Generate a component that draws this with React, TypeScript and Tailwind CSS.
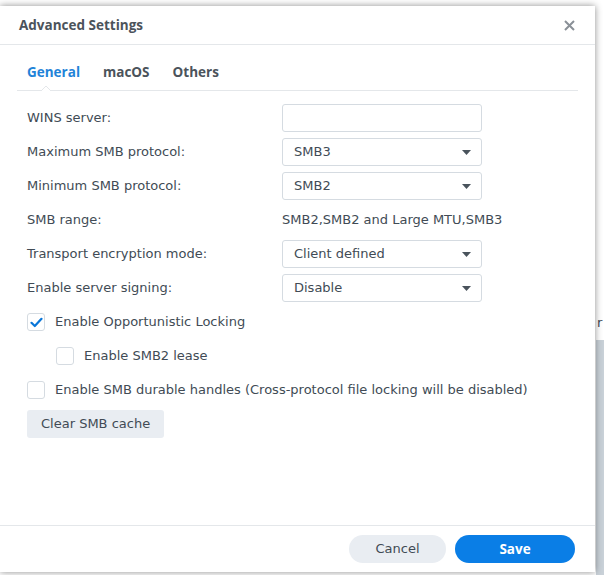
import React from "react";

const txt = "text-[#414b55]";

function Select({ value }: { value: string }) {
  return (
    <div className="w-[200px] h-[28px] border border-[#d5dbe1] rounded-[3px] bg-white flex items-center justify-between pl-[11px] pr-[10px]">
      <span className={`text-[13px] ${txt}`}>{value}</span>
      <svg width="9" height="5" viewBox="0 0 9 5"><path d="M0 0 L9 0 L4.5 5 Z" fill="#4a535c" /></svg>
    </div>
  );
}

function Check({ checked }: { checked?: boolean }) {
  return (
    <div className="w-[18px] h-[18px] border border-[#d5dbe1] rounded-[3px] bg-white flex items-center justify-center">
      {checked && (
        <svg width="13" height="11" viewBox="0 0 13 11">
          <path d="M1.5 5.8 L4.8 9 L11.5 1.8" fill="none" stroke="#0a76d8" strokeWidth="2.2" strokeLinecap="round" strokeLinejoin="round" />
        </svg>
      )}
    </div>
  );
}

function Row({ label, children }: { label: string; children: React.ReactNode }) {
  return (
    <div className="h-[34px] flex items-center">
      <div className={`w-[255px] text-[13px] ${txt}`}>{label}</div>
      {children}
    </div>
  );
}

export default function App() {
  return (
    <div
      className="relative w-[604px] h-[575px] bg-white overflow-hidden"
      style={{ fontFamily: '"DejaVu Sans", Verdana, sans-serif' }}
    >
      {/* background window content */}
      <div className="absolute left-[597px] top-[313px] text-[13px] text-[#414b55]">r</div>
      <div className="absolute left-[596px] top-[340px] w-[20px] h-[240px] bg-[#c9d1d8]" />

      <div className="pt-[6px]">
        <div className="relative w-[595px] h-[566px] bg-white shadow-[0_0_7px_rgba(0,0,0,0.45)] flex flex-col">
          {/* header */}
          <div className="h-[39px] flex items-center justify-between pl-[19px] pr-[20px] border-b border-[#e4e7ea]">
            <span className="text-[13.5px] font-bold text-[#4b535b]" style={{ fontFamily: '"Open Sans", sans-serif' }}>
              Advanced Settings
            </span>
            <svg width="11" height="11" viewBox="0 0 11 11">
              <path d="M1 1 L10 10 M10 1 L1 10" stroke="#8a9097" strokeWidth="2" />
            </svg>
          </div>

          {/* tabs */}
          <div className="mx-[17px] mt-[12px] h-[34px] border-b border-[#e4e7ea] relative flex items-center gap-[23px] pl-[10px] pb-[3px]" style={{ fontFamily: '"Open Sans", sans-serif' }}>
            <span className="text-[13.5px] font-bold text-[#1f83d8]">General</span>
            <span className="text-[13.5px] font-bold text-[#4b535b]">macOS</span>
            <span className="text-[13.5px] font-bold text-[#4b535b]">Others</span>
            <div className="absolute left-[24px] bottom-[-1px] w-[10px] h-[6px]">
              <svg width="10" height="6" viewBox="0 0 10 6">
                <path d="M0 6 L5 1 L10 6" fill="white" stroke="#e4e7ea" strokeWidth="1" />
              </svg>
            </div>
          </div>

          {/* form */}
          <div className="pl-[27px] pt-[10px] flex flex-col">
            <Row label="WINS server:">
              <div className="w-[200px] h-[28px] border border-[#d5dbe1] rounded-[3px] bg-white" />
            </Row>
            <Row label="Maximum SMB protocol:"><Select value="SMB3" /></Row>
            <Row label="Minimum SMB protocol:"><Select value="SMB2" /></Row>
            <Row label="SMB range:">
              <span className={`text-[13px] ${txt}`}>SMB2,SMB2 and Large MTU,SMB3</span>
            </Row>
            <Row label="Transport encryption mode:"><Select value="Client defined" /></Row>
            <Row label="Enable server signing:"><Select value="Disable" /></Row>

            <div className="h-[34px] flex items-center gap-[10px]">
              <Check checked />
              <span className={`text-[13px] ${txt}`}>Enable Opportunistic Locking</span>
            </div>
            <div className="h-[34px] flex items-center gap-[10px] pl-[29px]">
              <Check />
              <span className={`text-[13px] ${txt}`}>Enable SMB2 lease</span>
            </div>
            <div className="h-[34px] flex items-center gap-[10px]">
              <Check />
              <span className={`text-[13px] ${txt}`}>Enable SMB durable handles (Cross-protocol file locking will be disabled)</span>
            </div>
            <div className="mt-[3px]">
              <button className={`h-[28px] px-[14px] rounded-[3px] bg-[#e9edf2] text-[13px] ${txt}`}>
                Clear SMB cache
              </button>
            </div>
          </div>

          <div className="flex-1" />

          {/* footer */}
          <div className="h-[47px] border-t border-[#e4e7ea] flex items-center justify-end gap-[9px] pr-[20px]">
            <button className={`w-[97px] h-[28px] rounded-full bg-[#e9edf2] text-[13px] ${txt}`}>Cancel</button>
            <button className="w-[120px] h-[28px] rounded-full bg-[#0a7ee6] text-[13.5px] font-bold text-white" style={{ fontFamily: '"Open Sans", sans-serif' }}>
              Save
            </button>
          </div>
        </div>
      </div>
    </div>
  );
}
